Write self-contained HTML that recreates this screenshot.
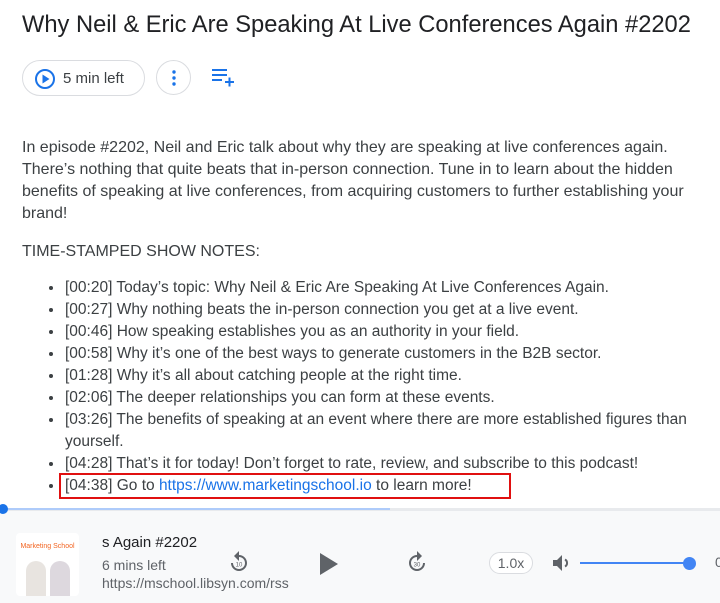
<!DOCTYPE html>
<html><head><meta charset="utf-8"><style>
*{margin:0;padding:0;box-sizing:border-box}
body{width:720px;height:603px;overflow:hidden;background:#fff;font-family:"Liberation Sans",Arial,sans-serif;color:#3c4043;position:relative}
h1{position:absolute;left:22px;top:12px;font-size:23.7px;font-weight:400;color:#202124;white-space:nowrap}
.pill{position:absolute;left:22px;top:60px;width:123px;height:36px;border:1px solid #dadce0;border-radius:18px}
.pill span{position:absolute;left:40px;top:9px;font-size:15px;color:#3c4043}
.more{position:absolute;left:156px;top:60px;width:35px;height:35px;border:1px solid #dadce0;border-radius:50%}
.txt{position:absolute;left:22px;top:137px;width:690px;font-size:16px;line-height:22px}
ul{margin-left:42px;font-size:15.5px}
li{padding-left:1px}
a{color:#1a73e8;text-decoration:none}
.box{position:absolute;left:59px;top:473px;width:452px;height:26px;border:2px solid #e01010}
.prog{position:absolute;left:0;top:508px;width:720px;height:3px;background:#e8eaed}
.prog i{position:absolute;left:0;top:0;width:390px;height:2px;background:#aecbfa}
.dot{position:absolute;left:-2px;top:504px;width:10px;height:10px;border-radius:50%;background:#1a73e8}
.player{position:absolute;left:0;top:511px;width:720px;height:92px;background:#f8f9fa;box-shadow:0 -1px 2px rgba(0,0,0,.08)}
.art{position:absolute;left:16px;top:533px;width:63px;height:63px;background:#fff;border-radius:4px}
</style></head><body>
<h1>Why Neil &amp; Eric Are Speaking At Live Conferences Again #2202</h1>
<div class="pill"><svg style="position:absolute;left:11px;top:7px" width="22" height="22" viewBox="0 0 22 22"><circle cx="11" cy="11" r="9" fill="none" stroke="#1a73e8" stroke-width="2"/><path d="M8.5 6.5v9l7-4.5z" fill="#1a73e8"/></svg><span>5 min left</span></div>
<div class="more"><svg style="position:absolute;left:15px;top:9px" width="4" height="16"><circle cx="2" cy="2" r="1.7" fill="#1a73e8"/><circle cx="2" cy="8" r="1.7" fill="#1a73e8"/><circle cx="2" cy="14" r="1.7" fill="#1a73e8"/></svg></div>
<svg style="position:absolute;left:211px;top:68px" width="24" height="20"><path d="M1 2h15M1 7h15M1 12h10M14 14h9M18.5 9.5v9" stroke="#1a73e8" stroke-width="2" fill="none"/></svg>
<div class="txt">
<p>In episode #2202, Neil and Eric talk about why they are speaking at live conferences again. There’s nothing that quite beats that in-person connection. Tune in to learn about the hidden benefits of speaking at live conferences, from acquiring customers to further establishing your brand!</p>
<p style="margin-top:16px">TIME-STAMPED SHOW NOTES:</p>
<ul style="margin-top:14px">
<li>[00:20] Today’s topic: Why Neil &amp; Eric Are Speaking At Live Conferences Again.</li>
<li>[00:27] Why nothing beats the in-person connection you get at a live event.</li>
<li>[00:46] How speaking establishes you as an authority in your field.</li>
<li>[00:58] Why it’s one of the best ways to generate customers in the B2B sector.</li>
<li>[01:28] Why it’s all about catching people at the right time.</li>
<li>[02:06] The deeper relationships you can form at these events.</li>
<li>[03:26] The benefits of speaking at an event where there are more established figures than yourself.</li>
<li>[04:28] That’s it for today! Don’t forget to rate, review, and subscribe to this podcast!</li>
<li>[04:38] Go to <a>https://www.marketingschool.io</a> to learn more!</li>
</ul></div>
<div class="box"></div>
<div class="player"></div>
<div class="prog"><i></i></div>
<div class="dot"></div>
<div class="art"><div style="position:absolute;left:0;top:10px;width:63px;text-align:center;font-size:7px;color:#f26522">Marketing School</div><div style="position:absolute;left:10px;top:28px;width:20px;height:35px;background:#e8e4e0;border-radius:10px 10px 0 0"></div><div style="position:absolute;left:34px;top:28px;width:20px;height:35px;background:#ddd8de;border-radius:10px 10px 0 0"></div></div>
<div style="position:absolute;left:102px;top:534px;font-size:15px;color:#202124">s Again #2202</div>
<div style="position:absolute;left:102px;top:557px;font-size:14px;color:#5f6368">6 mins left</div>
<div style="position:absolute;left:102px;top:575px;font-size:14px;color:#5f6368">https://mschool.libsyn.com/rss</div>
<svg style="position:absolute;left:227px;top:550px" width="24" height="24" viewBox="0 0 24 24"><path d="M12 5V1L7 6l5 5V7c3.3 0 6 2.7 6 6s-2.7 6-6 6-6-2.7-6-6H4c0 4.4 3.6 8 8 8s8-3.6 8-8-3.6-8-8-8z" fill="#5f6368"/><text x="12" y="16.5" font-size="6" text-anchor="middle" fill="#5f6368" font-family="Liberation Sans">10</text></svg>
<svg style="position:absolute;left:318px;top:552px" width="22" height="24"><path d="M2 1v22l18-11z" fill="#5f6368"/></svg>
<svg style="position:absolute;left:405px;top:550px" width="24" height="24" viewBox="0 0 24 24"><path d="M12 5V1l5 5-5 5V7c-3.3 0-6 2.7-6 6s2.7 6 6 6 6-2.7 6-6h2c0 4.4-3.6 8-8 8s-8-3.6-8-8 3.6-8 8-8z" fill="#5f6368"/><text x="12" y="16.5" font-size="6" text-anchor="middle" fill="#5f6368" font-family="Liberation Sans">30</text></svg>
<div style="position:absolute;left:489px;top:552px;width:44px;height:22px;border:1px solid #dadce0;border-radius:11px;background:#fff;font-size:14px;color:#5f6368;text-align:center;line-height:20px">1.0x</div>
<svg style="position:absolute;left:552px;top:554px" width="20" height="18" viewBox="0 0 20 18"><path d="M1 6h4l5-5v16l-5-5H1z" fill="#5f6368"/><path d="M13 5.5a4 4 0 0 1 0 7" stroke="#5f6368" stroke-width="2" fill="none"/></svg>
<div style="position:absolute;left:580px;top:562px;width:110px;height:2px;background:#4285f4"></div>
<div style="position:absolute;left:683px;top:557px;width:13px;height:13px;border-radius:50%;background:#4285f4"></div>
<div style="position:absolute;left:715px;top:554px;font-size:14px;color:#5f6368">0</div>
</body></html>
